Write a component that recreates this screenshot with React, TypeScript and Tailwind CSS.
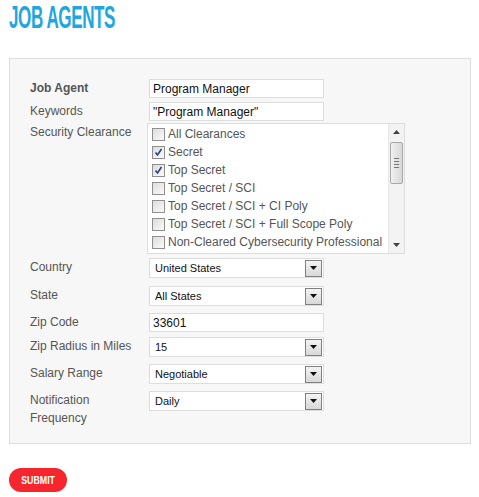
import React from 'react';

const CLEARANCES = [
  { label: 'All Clearances', checked: false },
  { label: 'Secret', checked: true },
  { label: 'Top Secret', checked: true },
  { label: 'Top Secret / SCI', checked: false },
  { label: 'Top Secret / SCI + CI Poly', checked: false },
  { label: 'Top Secret / SCI + Full Scope Poly', checked: false },
  { label: 'Non-Cleared Cybersecurity Professional', checked: false },
];

function Label({ children, bold }: { children: React.ReactNode; bold?: boolean }) {
  return (
    <div className={`w-[119px] shrink-0 pr-2 text-[12px] leading-[18px] text-[#555] ${bold ? 'font-bold' : ''}`}>
      {children}
    </div>
  );
}

function TextInput({ value }: { value: string }) {
  return (
    <div className="flex h-[19px] w-[175px] items-center border border-[#ddd] bg-white pl-[3px] text-[12px] text-[#111]">
      {value}
    </div>
  );
}

function Select({ value }: { value: string }) {
  return (
    <div className="flex h-[20px] w-[175px] items-center justify-between border border-[#ddd] bg-white pl-[5px] pr-[1px] text-[11px] text-[#111]">
      <span>{value}</span>
      <span className="flex h-[17px] w-[17px] items-center justify-center border border-[#808080] bg-gradient-to-b from-[#f4f4f4] to-[#d8d8d8]">
        <svg width="7" height="4" viewBox="0 0 7 4">
          <path d="M0 0h7L3.5 4z" fill="#111" />
        </svg>
      </span>
    </div>
  );
}

function Checkbox({ checked }: { checked: boolean }) {
  return (
    <span className="flex h-[13px] w-[13px] shrink-0 items-center justify-center border border-[#8f8f8f] bg-gradient-to-br from-[#dcdcdc] to-[#fbfbfb]">
      {checked && (
        <svg width="9" height="9" viewBox="0 0 9 9">
          <path d="M1.5 4.5l2 2.5L7.5 1" stroke="#2b3f8a" strokeWidth="1.6" fill="none" />
        </svg>
      )}
    </span>
  );
}

export default function App() {
  return (
    <div className="h-[497px] w-[479px] bg-white pl-[9px] pt-[3px]" style={{ fontFamily: '"Liberation Sans", Arial, sans-serif' }}>
      <h1 className="h-[55px] whitespace-nowrap">
        <span className="inline-block origin-left scale-x-[0.55] text-[31px] font-bold leading-[29px] tracking-tight text-[#1ea6de]">
          JOB AGENTS
        </span>
      </h1>

      <div className="w-[462px] border border-[#ddd] bg-[#f7f7f7] px-5 pb-[16px] pt-5">
        <div className="flex items-start">
          <Label bold>Job Agent</Label>
          <TextInput value="Program Manager" />
        </div>
        <div className="mt-[4px] flex items-start">
          <Label>Keywords</Label>
          <TextInput value={'"Program Manager"'} />
        </div>
        <div className="mt-[2px] flex items-start">
          <Label>Security Clearance</Label>
          <div className="-ml-[2px] flex h-[131px] w-[258px] border border-[#ddd] bg-white">
            <div className="flex-1 pl-[4px] pt-[1px]">
              {CLEARANCES.map(c => (
                <div key={c.label} className="flex h-[18px] items-center gap-[3px] whitespace-nowrap text-[12px] text-[#555]">
                  <Checkbox checked={c.checked} />
                  <span>{c.label}</span>
                </div>
              ))}
            </div>
            <div className="flex w-[16px] flex-col items-center border-l border-[#e6e6e6] bg-[#f3f3f3]">
              <div className="flex h-[16px] items-center justify-center">
                <svg width="7" height="4" viewBox="0 0 7 4">
                  <path d="M3.5 0L7 4H0z" fill="#444" />
                </svg>
              </div>
              <div className="mt-[2px] flex h-[42px] w-[13px] flex-col items-center justify-center gap-[2px] rounded-[2px] border border-[#a8a8a8] bg-gradient-to-r from-[#f0f0f0] to-[#d7d7d7]">
                <span className="h-px w-[5px] bg-[#777]" />
                <span className="h-px w-[5px] bg-[#777]" />
                <span className="h-px w-[5px] bg-[#777]" />
                <span className="h-px w-[5px] bg-[#777]" />
              </div>
              <div className="flex-1" />
              <div className="flex h-[16px] items-center justify-center">
                <svg width="7" height="4" viewBox="0 0 7 4">
                  <path d="M0 0h7L3.5 4z" fill="#444" />
                </svg>
              </div>
            </div>
          </div>
        </div>
        <div className="mt-[4px] flex items-start">
          <Label>Country</Label>
          <Select value="United States" />
        </div>
        <div className="mt-[8px] flex items-start">
          <Label>State</Label>
          <Select value="All States" />
        </div>
        <div className="mt-[7px] flex items-start">
          <Label>Zip Code</Label>
          <TextInput value="33601" />
        </div>
        <div className="mt-[5px] flex items-start">
          <Label>Zip Radius in Miles</Label>
          <Select value="15" />
        </div>
        <div className="mt-[7px] flex items-start">
          <Label>Salary Range</Label>
          <Select value="Negotiable" />
        </div>
        <div className="mt-[7px] flex items-start">
          <Label>Notification Frequency</Label>
          <Select value="Daily" />
        </div>
      </div>

      <button className="mt-[24px] flex h-[24px] w-[58px] items-center justify-center rounded-full bg-[#f7262e]">
        <span className="inline-block scale-x-[0.8] text-[11px] font-semibold text-white">SUBMIT</span>
      </button>
    </div>
  );
}
